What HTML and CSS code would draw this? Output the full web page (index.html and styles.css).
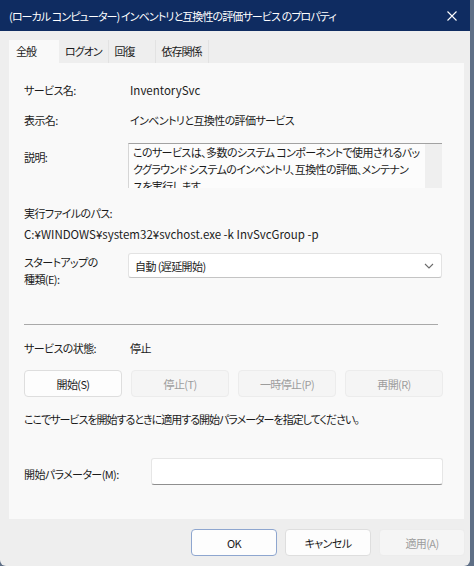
FILE: index.html
```html
<!DOCTYPE html>
<html lang="ja">
<head>
  <meta charset="UTF-8">
  <title>InventorySvc のプロパティ</title>
  <link rel="stylesheet" href="styles.css">
</head>
<body>
  <div class="window">
    <div class="titlebar">
      <span class="title">(ローカル コンピューター) インベントリと互換性の評価サービス のプロパティ</span>
      <svg class="close" width="10" height="10" viewBox="0 0 10 10">
        <path d="M0.5 0.5 L9.5 9.5 M9.5 0.5 L0.5 9.5" stroke="#ffffff" stroke-width="1.1" fill="none"/>
      </svg>
    </div>

    <div class="tabs">
      <div class="tab active">全般</div>
      <div class="tab">ログオン</div>
      <div class="tab">回復</div>
      <div class="tab">依存関係</div>
    </div>

    <div class="panel">
      <div class="row r-name">
        <span class="label">サービス名:</span>
        <span class="value latin">InventorySvc</span>
      </div>
      <div class="row r-display">
        <span class="label">表示名:</span>
        <span class="value">インベントリと互換性の評価サービス</span>
      </div>
      <div class="row r-desc">
        <span class="label">説明:</span>
        <div class="desc">
          <div class="desc-text">このサービスは、多数のシステム コンポーネントで使用されるバッ<br>クグラウンド システムのインベントリ、互換性の評価、メンテナン<br>スを実行します</div>
          <div class="scroll-track"></div>
        </div>
      </div>
      <div class="path-label">実行ファイルのパス:</div>
      <div class="path latin">C:¥WINDOWS¥system32¥svchost.exe -k InvSvcGroup -p</div>
      <div class="row r-startup">
        <span class="label two-line">スタートアップの<br>種類(E):</span>
        <div class="select">
          <span>自動 (遅延開始)</span>
          <svg class="chevron" width="10" height="6" viewBox="0 0 10 6">
            <path d="M1 1 L5 5 L9 1" stroke="#6b6b6b" stroke-width="1.1" fill="none"/>
          </svg>
        </div>
      </div>
      <div class="separator"></div>
      <div class="row r-status">
        <span class="label">サービスの状態:</span>
        <span class="value">停止</span>
      </div>
      <div class="svc-buttons">
        <button class="btn">開始(S)</button>
        <button class="btn" disabled>停止(T)</button>
        <button class="btn" disabled>一時停止(P)</button>
        <button class="btn" disabled>再開(R)</button>
      </div>
      <div class="help">ここでサービスを開始するときに適用する開始パラメーターを指定してください。</div>
      <div class="row r-param">
        <span class="label wide">開始パラメーター(M):</span>
        <div class="input"></div>
      </div>
    </div>

    <div class="footer">
      <button class="btn default">OK</button>
      <button class="btn">キャンセル</button>
      <button class="btn" disabled>適用(A)</button>
    </div>
  </div>
</body>
</html>
```

FILE: styles.css
```css
body {
  margin: 0;
  background: #5f6f86;
  font-family: "Noto Sans CJK JP", "Noto Sans", sans-serif;
  font-feature-settings: "palt";
  font-size: 11px;
  letter-spacing: -0.6px;
  color: #1b1b1b;
}
.latin {
  font-size: 11.5px;
  letter-spacing: 0;
}
.window {
  width: 470px;
  height: 566px;
  background: #eeeeee;
  border-radius: 0 0 6px 6px;
  overflow: hidden;
}
.titlebar {
  height: 31px;
  background: #0f2c61;
  color: #ffffff;
  display: flex;
  align-items: center;
  padding: 0 9px 0 9px;
}
.title {
  flex: 1;
  white-space: nowrap;
  letter-spacing: -0.9px;
}
.close {
  margin-right: 4px;
}

/* tabs */
.tabs {
  display: flex;
  margin: 9px 0 0 9px;
  height: 23px;
}
.tab {
  box-sizing: border-box;
  min-width: 47px;
  padding: 0 6px;
  line-height: 23px;
  letter-spacing: -1px;
  border-right: 1px solid #e2e2e2;
}
.tab.active {
  min-width: 50px;
  padding-left: 7px;
  background: #f9f9f9;
  border-right: none;
}

/* page */
.panel {
  box-sizing: border-box;
  height: 456px;
  margin: 0 6px 0 9px;
  padding: 18px 0 0 15px;
  background: #f9f9f9;
}
.row {
  display: flex;
  align-items: flex-start;
  line-height: 18px;
}
.label {
  width: 106px;
  flex: none;
}
.r-display {
  margin-top: 12px;
}
.r-desc {
  margin-top: 14px;
}
.r-desc .label {
  margin-top: 5px;
}
.desc {
  display: flex;
  width: 313px;
  height: 44px;
  margin-left: -2px;
  background: #fcfcfc;
  border-top: 1px solid #a2a2a2;
  border-left: 1px solid #d6d6d6;
  overflow: hidden;
}
.desc-text {
  flex: 1;
  padding-left: 4px;
  line-height: 17px;
  white-space: nowrap;
  overflow: hidden;
}
.scroll-track {
  width: 17px;
  background: #efefef;
}
.path-label {
  margin-top: 16px;
  line-height: 18px;
}
.path {
  margin-top: 3px;
  line-height: 18px;
}
.r-startup {
  margin-top: 10px;
  height: 36px;
}
.two-line {
  margin-top: 1px;
  line-height: 17px;
}
.select {
  box-sizing: border-box;
  width: 314px;
  height: 25px;
  margin-left: -2px;
  padding: 0 6px;
  display: flex;
  align-items: center;
  justify-content: space-between;
  background: #ffffff;
  border: 1px solid #e3e3e3;
  border-bottom-color: #c4c4c4;
  border-radius: 3px;
}
.chevron {
  margin-right: 1px;
}
.separator {
  width: 414px;
  margin-top: 35px;
  border-top: 1px solid #a9a9a9;
}
.r-status {
  margin-top: 14px;
}
.svc-buttons {
  display: grid;
  grid-template-columns: repeat(4, 98px);
  gap: 9px;
  margin-top: 13px;
}
.btn {
  box-sizing: border-box;
  height: 27px;
  padding: 0;
  font: inherit;
  letter-spacing: inherit;
  color: #1b1b1b;
  background: #fdfdfd;
  border: 1px solid #dedede;
  border-radius: 4px;
}
.btn:disabled {
  color: #9d9d9d;
  background: #f5f5f5;
  border-color: #ececec;
}
.help {
  margin-top: 13px;
  line-height: 18px;
  letter-spacing: -1px;
}
.r-param {
  margin-top: 30px;
}
.label.wide {
  width: 127px;
  margin-top: 7px;
}
.input {
  box-sizing: border-box;
  width: 292px;
  height: 27px;
  background: #ffffff;
  border: 1px solid #e6e6e6;
  border-bottom-color: #8f8f8f;
  border-radius: 3px;
}

/* bottom buttons */
.footer {
  display: flex;
  justify-content: flex-end;
  gap: 8px;
  padding: 10px 5px 0 0;
}
.footer .btn {
  width: 86px;
}
.footer .btn.default {
  border-color: #8ea6cf;
}
```
